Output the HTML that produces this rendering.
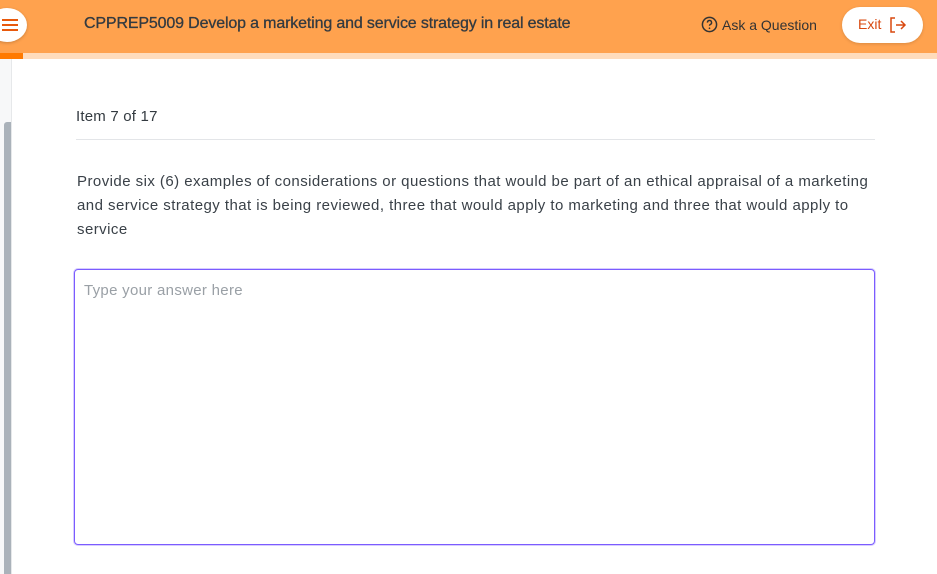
<!DOCTYPE html>
<html><head><style>
body{margin:0;width:937px;height:574px;overflow:hidden;background:#fff;font-family:"Liberation Sans",sans-serif;position:relative}
.hdr{position:absolute;left:0;top:0;width:937px;height:53px;background:#ffa24e}
.menu{position:absolute;left:-13px;top:8px;width:40px;height:34px;border-radius:50%;background:#fff;box-shadow:0 1px 3px rgba(0,0,0,.2)}
.menu i{position:absolute;left:15px;width:16px;height:2px;background:#e8590c}
.title{position:absolute;left:84px;top:15px;font-size:16px;color:#333a40;letter-spacing:-0.15px;-webkit-text-stroke:0.3px #333a40}
.ask{position:absolute;left:701px;top:16px;font-size:14px;color:#333}
.exit{position:absolute;left:842px;top:7px;width:81px;height:36px;border-radius:18px;background:#fff;box-shadow:0 1px 3px rgba(0,0,0,.15);color:#d9480f;font-size:14px}
.prog{position:absolute;left:0;top:53px;width:937px;height:6px;background:#ffdcbc}
.prog b{position:absolute;left:0;top:0;width:23px;height:6px;background:#ff7a00}
.side{position:absolute;left:0;top:59px;width:11px;height:515px;background:#f7f8f9;border-right:1px solid #e6e8ea}
.scroll{position:absolute;left:4px;top:122px;width:7px;height:452px;background:#aab2ba;border-radius:3px 0 0 0}
.item{position:absolute;left:76px;top:108px;font-size:15px;color:#333a40;letter-spacing:0.2px}
.hr{position:absolute;left:76px;top:139px;width:799px;height:1px;background:#e3e5e8}
.q{position:absolute;left:77px;top:170px;width:820px;font-size:15px;line-height:24px;color:#3a4148;letter-spacing:0.45px;white-space:nowrap}
.ta{position:absolute;left:74px;top:269px;width:799px;height:274px;border:1.5px solid #7b5cff;border-radius:4px;box-shadow:0 0 0 1px #d6cdff}
.ph{position:absolute;left:9px;top:12px;font-size:15px;color:#9aa0a6;letter-spacing:0.3px}
</style></head><body>
<div class="hdr">
<div class="menu"><i style="top:11px"></i><i style="top:16px"></i><i style="top:21px"></i></div>
<div class="title">CPPREP5009 Develop a marketing and service strategy in real estate</div>
<div class="ask"><svg width="17" height="17" viewBox="0 0 18 18" style="vertical-align:-3px;margin-right:4px"><circle cx="9" cy="9" r="7.5" fill="none" stroke="#333" stroke-width="1.6"/><path d="M6.8 7a2.2 2.2 0 1 1 3 2c-.6.3-.8.7-.8 1.3" fill="none" stroke="#333" stroke-width="1.5"/><circle cx="9" cy="13" r=".9" fill="#333"/></svg>Ask a Question</div>
<div class="exit"><span style="position:absolute;left:16px;top:9px">Exit</span><svg width="18" height="16" viewBox="0 0 18 16" style="position:absolute;left:47px;top:10px"><path d="M6 1H2v14h4M7 8h9M12 4l4 4-4 4" fill="none" stroke="#d9480f" stroke-width="1.5"/></svg></div>
</div>
<div class="prog"><b></b></div>
<div class="side"></div><div class="scroll"></div>
<div class="item">Item 7 of 17</div>
<div class="hr"></div>
<div class="q">Provide six (6) examples of considerations or questions that would be part of an ethical appraisal of a marketing<br>and service strategy that is being reviewed, three that would apply to marketing and three that would apply to<br>service</div>
<div class="ta"><div class="ph">Type your answer here</div></div>
</body></html>
